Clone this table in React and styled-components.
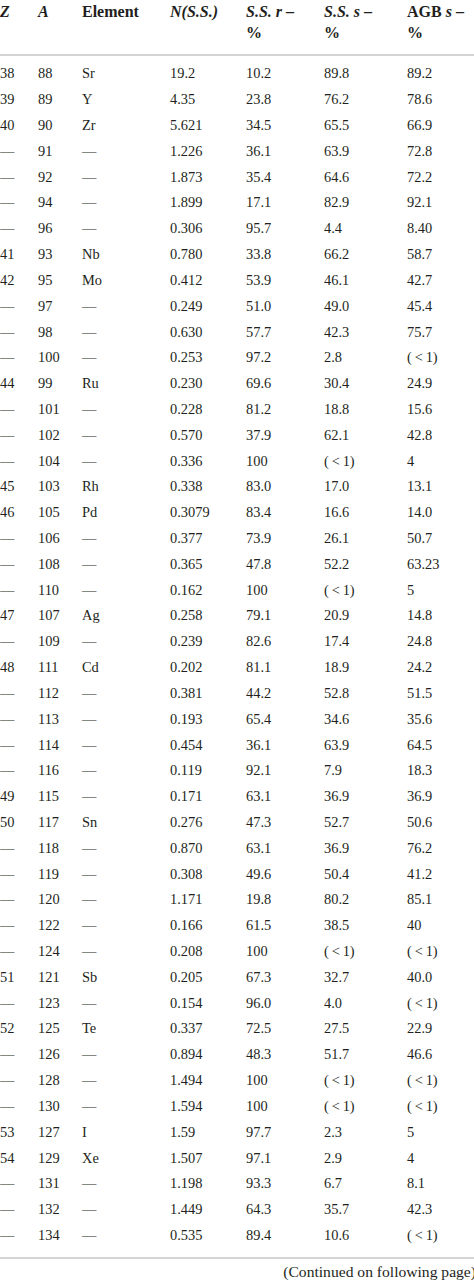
import React from "react";
import styled, { createGlobalStyle } from "styled-components";

const GlobalStyle = createGlobalStyle`
  html, body {
    margin: 0;
    padding: 0;
    background: #fff;
  }
  body {
    width: 474px;
    overflow: hidden;
    font-family: "Liberation Serif", "Times New Roman", serif;
    color: #231f20;
  }
`;

const LT = "(\u2009<\u20091)";

const rows = [
  ["38", "88", "Sr", "19.2", "10.2", "89.8", "89.2"],
  ["39", "89", "Y", "4.35", "23.8", "76.2", "78.6"],
  ["40", "90", "Zr", "5.621", "34.5", "65.5", "66.9"],
  ["—", "91", "—", "1.226", "36.1", "63.9", "72.8"],
  ["—", "92", "—", "1.873", "35.4", "64.6", "72.2"],
  ["—", "94", "—", "1.899", "17.1", "82.9", "92.1"],
  ["—", "96", "—", "0.306", "95.7", "4.4", "8.40"],
  ["41", "93", "Nb", "0.780", "33.8", "66.2", "58.7"],
  ["42", "95", "Mo", "0.412", "53.9", "46.1", "42.7"],
  ["—", "97", "—", "0.249", "51.0", "49.0", "45.4"],
  ["—", "98", "—", "0.630", "57.7", "42.3", "75.7"],
  ["—", "100", "—", "0.253", "97.2", "2.8", LT],
  ["44", "99", "Ru", "0.230", "69.6", "30.4", "24.9"],
  ["—", "101", "—", "0.228", "81.2", "18.8", "15.6"],
  ["—", "102", "—", "0.570", "37.9", "62.1", "42.8"],
  ["—", "104", "—", "0.336", "100", LT, "4"],
  ["45", "103", "Rh", "0.338", "83.0", "17.0", "13.1"],
  ["46", "105", "Pd", "0.3079", "83.4", "16.6", "14.0"],
  ["—", "106", "—", "0.377", "73.9", "26.1", "50.7"],
  ["—", "108", "—", "0.365", "47.8", "52.2", "63.23"],
  ["—", "110", "—", "0.162", "100", LT, "5"],
  ["47", "107", "Ag", "0.258", "79.1", "20.9", "14.8"],
  ["—", "109", "—", "0.239", "82.6", "17.4", "24.8"],
  ["48", "111", "Cd", "0.202", "81.1", "18.9", "24.2"],
  ["—", "112", "—", "0.381", "44.2", "52.8", "51.5"],
  ["—", "113", "—", "0.193", "65.4", "34.6", "35.6"],
  ["—", "114", "—", "0.454", "36.1", "63.9", "64.5"],
  ["—", "116", "—", "0.119", "92.1", "7.9", "18.3"],
  ["49", "115", "—", "0.171", "63.1", "36.9", "36.9"],
  ["50", "117", "Sn", "0.276", "47.3", "52.7", "50.6"],
  ["—", "118", "—", "0.870", "63.1", "36.9", "76.2"],
  ["—", "119", "—", "0.308", "49.6", "50.4", "41.2"],
  ["—", "120", "—", "1.171", "19.8", "80.2", "85.1"],
  ["—", "122", "—", "0.166", "61.5", "38.5", "40"],
  ["—", "124", "—", "0.208", "100", LT, LT],
  ["51", "121", "Sb", "0.205", "67.3", "32.7", "40.0"],
  ["—", "123", "—", "0.154", "96.0", "4.0", LT],
  ["52", "125", "Te", "0.337", "72.5", "27.5", "22.9"],
  ["—", "126", "—", "0.894", "48.3", "51.7", "46.6"],
  ["—", "128", "—", "1.494", "100", LT, LT],
  ["—", "130", "—", "1.594", "100", LT, LT],
  ["53", "127", "I", "1.59", "97.7", "2.3", "5"],
  ["54", "129", "Xe", "1.507", "97.1", "2.9", "4"],
  ["—", "131", "—", "1.198", "93.3", "6.7", "8.1"],
  ["—", "132", "—", "1.449", "64.3", "35.7", "42.3"],
  ["—", "134", "—", "0.535", "89.4", "10.6", LT],
];

const cols = "38px 44px 88px 76px 78px 83px 1fr";

const Page = styled.div`
  width: 474px;
`;

const Head = styled.div`
  display: grid;
  grid-template-columns: ${cols};
  height: 56px;
  padding-top: 1px;
  box-sizing: border-box;
  border-bottom: 2px solid #d4d4d4;
  font-size: 16px;
  font-weight: 700;
  line-height: 21px;
`;

const HeadCell = styled.div`
  font-style: ${(p) => (p.$italic ? "italic" : "normal")};
  white-space: pre-line;
  i {
    font-style: italic;
  }
`;

const Body = styled.div`
  padding: 5.4px 0 8px;
  border-bottom: 2px solid #d4d4d4;
`;

const Row = styled.div`
  display: grid;
  grid-template-columns: ${cols};
  height: 25.82px;
  font-size: 14.4px;
  line-height: 25.82px;
`;

const Cell = styled.div`
  white-space: nowrap;
`;

const Note = styled.div`
  text-align: right;
  font-size: 15.6px;
  line-height: 20px;
  margin-top: 3px;
  margin-right: -2px;
`;

export default function App() {
  return (
    <Page>
      <GlobalStyle />
      <Head>
        <HeadCell $italic>Z</HeadCell>
        <HeadCell $italic>A</HeadCell>
        <HeadCell>Element</HeadCell>
        <HeadCell $italic>N(S.S.)</HeadCell>
        <HeadCell>
          <i>S.S. r</i> –{"\n"}%
        </HeadCell>
        <HeadCell>
          <i>S.S. s</i> –{"\n"}%
        </HeadCell>
        <HeadCell>
          AGB <i>s</i> –{"\n"}%
        </HeadCell>
      </Head>
      <Body>
        {rows.map((r, i) => (
          <Row key={i}>
            {r.map((c, j) => (
              <Cell key={j}>{c}</Cell>
            ))}
          </Row>
        ))}
      </Body>
      <Note>(Continued on following page)</Note>
    </Page>
  );
}
